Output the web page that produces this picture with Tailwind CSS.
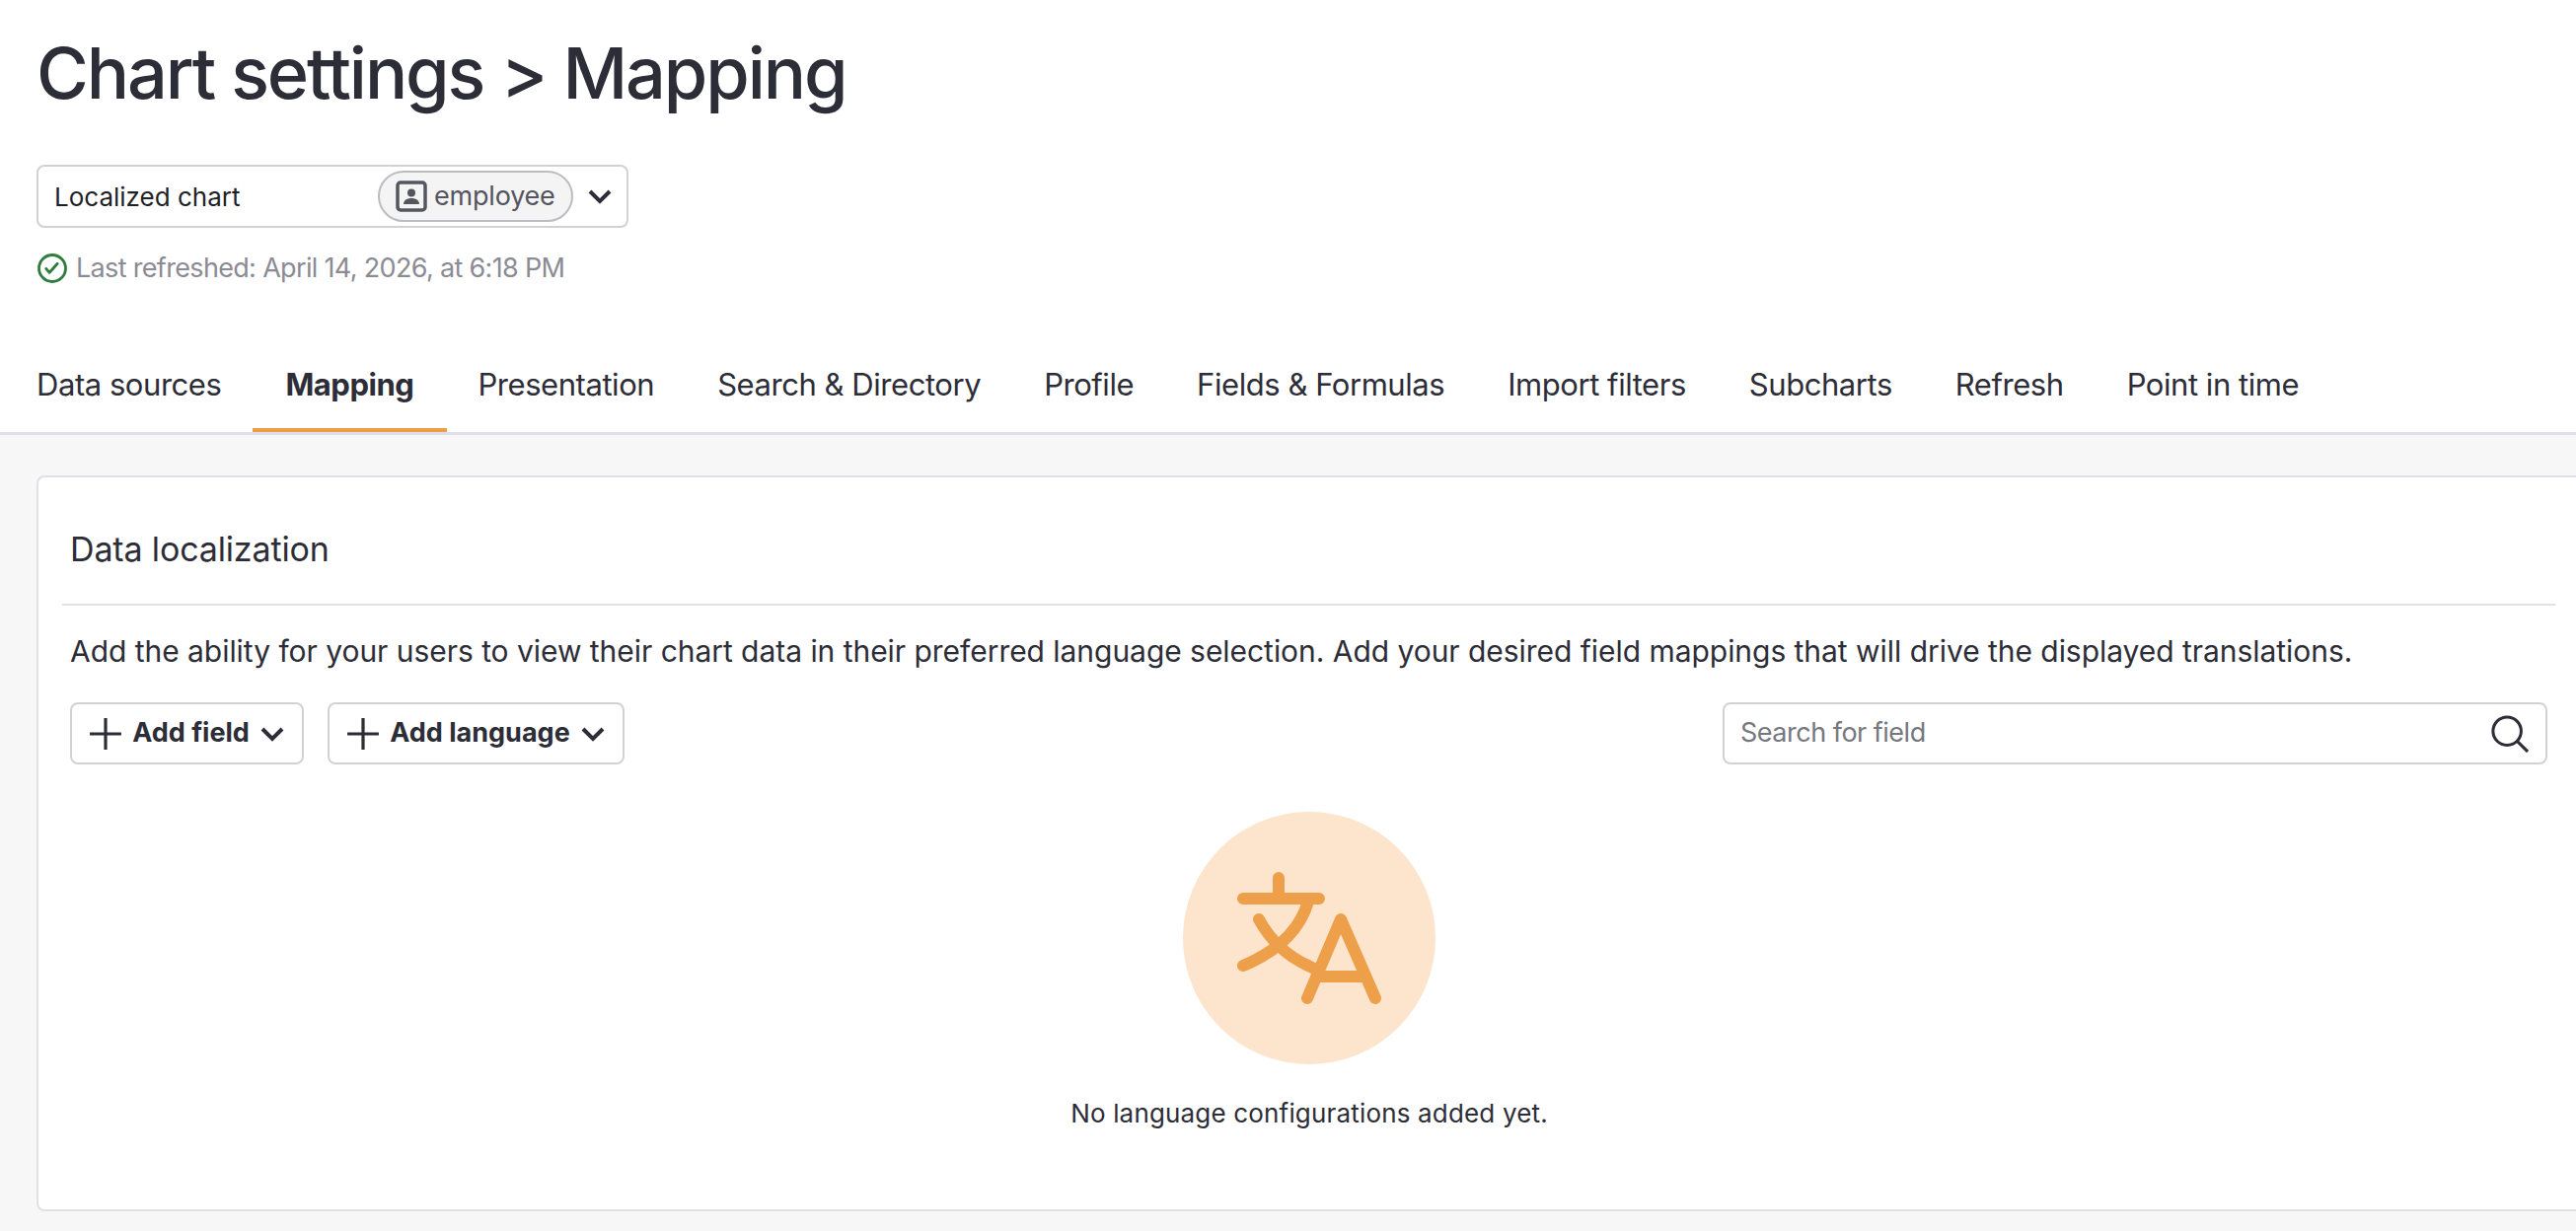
<!DOCTYPE html>
<html lang="en">
<head>
  <meta charset="UTF-8" />
  <title>Chart settings</title>
  <script src="https://cdn.jsdelivr.net/npm/@tailwindcss/browser@4"></script>
</head>
<body class="bg-[#f7f7f8] h-[1248px] overflow-hidden font-['Inter',sans-serif] text-[#2d2d38]">

  <!-- Header -->
  <div class="bg-white h-[441px] border-b-[3px] border-[#dde1e6] flex flex-col">
    <h1 class="pl-[37px] pt-[28px] text-[72px] leading-[92px] font-medium tracking-[-2.1px]">Chart settings &gt; Mapping</h1>

    <div class="ml-[37px] mt-[47px] w-[600px] h-[64px] border-2 border-[#d2d2d6] rounded-lg flex items-center pl-[16px] pr-[14px]">
      <span class="text-[26px] text-[#1f1f28] flex-1">Localized chart</span>
      <span class="h-[52px] w-[198px] -ml-[3px] mr-[3px] rounded-full border-2 border-[#bcbcc2] bg-[#f4f4f5] flex items-center pl-[16px] gap-[7px] text-[#55555f] text-[27px] tracking-[-0.2px]">
        <svg class="w-[32px] h-[32px]" viewBox="0 0 32 32" fill="none">
          <rect x="2" y="2" width="28" height="28" rx="3" stroke="#55555f" stroke-width="3.5"/>
          <circle cx="16" cy="12.5" r="4" fill="#55555f"/>
          <path d="M8 24c0-4 3.5-6 8-6s8 2 8 6z" fill="#55555f"/>
        </svg>
        employee
      </span>
      <svg class="ml-[11px] w-[26px] h-[18px]" viewBox="0 0 26 18" fill="none">
        <path d="M3 4l10 10L23 4" stroke="#2d2d38" stroke-width="4"/>
      </svg>
    </div>

    <div class="ml-[38px] mt-[26px] flex items-center gap-[9px] text-[27px] text-[#8b8b94] leading-[30px] tracking-[-0.67px]">
      <svg class="w-[30px] h-[30px]" viewBox="0 0 30 30" fill="none">
        <circle cx="15" cy="15" r="13.5" stroke="#2e7d3c" stroke-width="2.8"/>
        <path d="M8.7 15.3l3.5 4 8-9" stroke="#2e7d3c" stroke-width="2.8" stroke-linecap="round" stroke-linejoin="round"/>
      </svg>
      Last refreshed: April 14, 2026, at 6:18 PM
    </div>

    <!-- Tabs -->
    <div class="mt-auto pl-[37px] flex text-[31px] leading-[40px] tracking-[-0.45px]">
      <div class="pr-[32px] pt-[16px] pb-[28px]">Data sources</div>
      <div class="px-[33px] pt-[16px] pb-[24px] font-bold border-b-4 border-[#ee9d48]">Mapping</div>
      <div class="px-[32px] pt-[16px] pb-[28px]">Presentation</div>
      <div class="px-[32px] pt-[16px] pb-[28px]">Search &amp; Directory</div>
      <div class="px-[32px] pt-[16px] pb-[28px]">Profile</div>
      <div class="px-[32px] pt-[16px] pb-[28px]">Fields &amp; Formulas</div>
      <div class="px-[32px] pt-[16px] pb-[28px]">Import filters</div>
      <div class="px-[32px] pt-[16px] pb-[28px]">Subcharts</div>
      <div class="px-[32px] pt-[16px] pb-[28px]">Refresh</div>
      <div class="px-[32px] pt-[16px] pb-[28px]">Point in time</div>
    </div>
  </div>

  <!-- Card -->
  <div class="ml-[37px] mt-[41px] mr-[-10px] h-[746px] bg-white border-2 border-[#dfe0e8] rounded-lg">
    <div class="ml-[24px] mr-[29px] h-[130px] border-b-2 border-[#dfe0e8] flex items-center pl-[8px] pt-[16px] text-[34px] tracking-[-0.15px]">Data localization</div>
    <p class="ml-[32px] mt-[26px] text-[30px] leading-[40px] tracking-[-0.04px]">Add the ability for your users to view their chart data in their preferred language selection. Add your desired field mappings that will drive the displayed translations.</p>

    <div class="ml-[32px] mr-[37px] mt-[32px] flex items-center gap-[24px]">
      <button class="h-[63px] w-[237px] border-2 border-[#d2d2d6] rounded-lg flex items-center justify-center gap-[10px] text-[27px] font-bold">
        <svg class="w-[34px] h-[34px]" viewBox="0 0 32 32" fill="none"><path d="M16 1v30M1 16h30" stroke="#2d2d38" stroke-width="3"/></svg>
        Add field
        <svg class="w-[26px] h-[18px]" viewBox="0 0 26 18" fill="none"><path d="M3 4l10 10L23 4" stroke="#2d2d38" stroke-width="4"/></svg>
      </button>
      <button class="h-[63px] w-[301px] border-2 border-[#d2d2d6] rounded-lg flex items-center justify-center gap-[10px] text-[27px] font-bold">
        <svg class="w-[34px] h-[34px]" viewBox="0 0 32 32" fill="none"><path d="M16 1v30M1 16h30" stroke="#2d2d38" stroke-width="3"/></svg>
        Add language
        <svg class="w-[26px] h-[18px]" viewBox="0 0 26 18" fill="none"><path d="M3 4l10 10L23 4" stroke="#2d2d38" stroke-width="4"/></svg>
      </button>
      <div class="ml-auto h-[63px] w-[836px] border-2 border-[#d2d2d6] rounded-lg flex items-center pl-[16px] pr-[17px] text-[27px] text-[#77777f] tracking-[-0.5px]">
        <span class="flex-1">Search for field</span>
        <svg class="w-[38px] h-[38px]" viewBox="0 0 40 40" fill="none">
          <circle cx="17" cy="17" r="15" stroke="#2d2d38" stroke-width="3.2"/>
          <path d="M28 28l11 11" stroke="#2d2d38" stroke-width="3.2"/>
        </svg>
      </div>
    </div>

    <!-- Empty state -->
    <div class="w-[2580px] mt-[48px] flex flex-col items-center pr-[4px]">
      <div class="w-[256px] h-[256px] rounded-full bg-[#fce4cd]">
        <svg class="w-[256px] h-[256px]" viewBox="0 0 256 256" fill="none" stroke="#ee9f4a" stroke-width="12" stroke-linecap="round" stroke-linejoin="round">
          <path d="M97 67v21M61 88h77"/>
          <path d="M127 91c-8 27-30 50-66 65"/>
          <path d="M77 109c12 22 28 37 50 47l10 5"/>
          <path d="M126 189l34-80 35 80M136 167h48"/>
        </svg>
      </div>
      <div class="mt-[34px] text-[26px] leading-[32px] tracking-[0.17px]">No language configurations added yet.</div>
    </div>
  </div>
</body>
</html>
